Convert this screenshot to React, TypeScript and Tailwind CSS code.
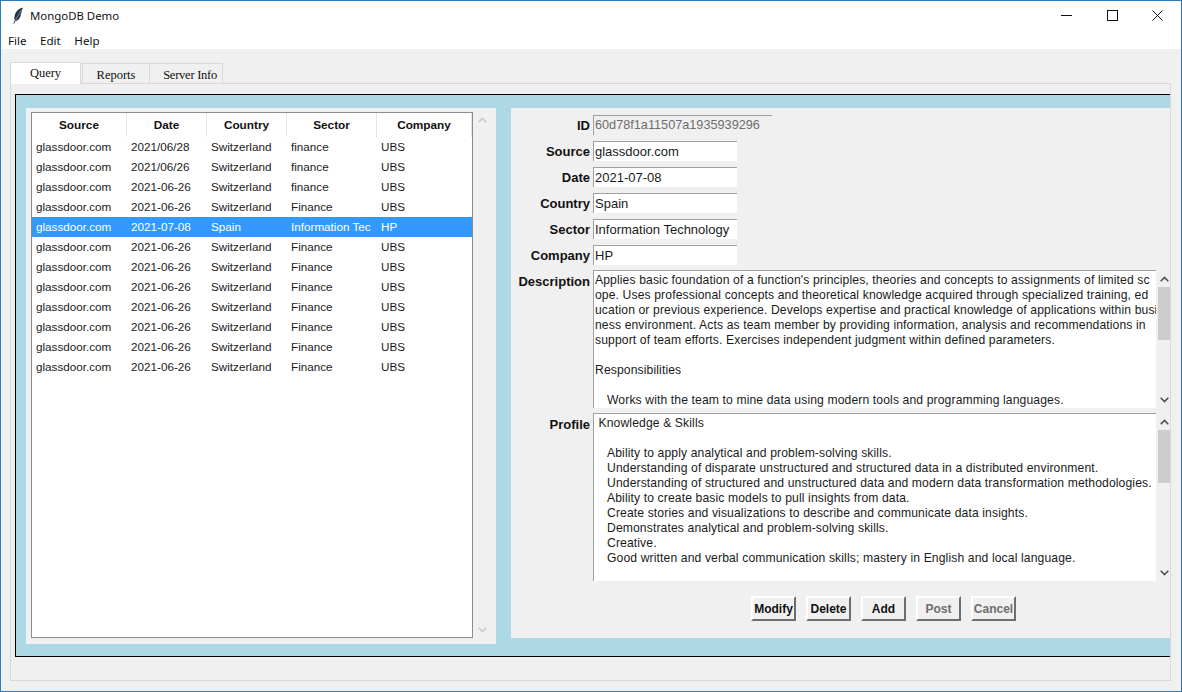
const columns = [
  { key: "source", label: "Source", width: "w-[95px]" },
  { key: "date", label: "Date", width: "w-[80px]" },
  { key: "country", label: "Country", width: "w-[80px]" },
  { key: "sector", label: "Sector", width: "w-[90px]" },
  { key: "company", label: "Company", width: "w-[95px]" },
];

const rows = [
  ["glassdoor.com", "2021/06/28", "Switzerland", "finance", "UBS"],
  ["glassdoor.com", "2021/06/26", "Switzerland", "finance", "UBS"],
  ["glassdoor.com", "2021-06-26", "Switzerland", "finance", "UBS"],
  ["glassdoor.com", "2021-06-26", "Switzerland", "Finance", "UBS"],
  ["glassdoor.com", "2021-07-08", "Spain", "Information Technology", "HP"],
  ["glassdoor.com", "2021-06-26", "Switzerland", "Finance", "UBS"],
  ["glassdoor.com", "2021-06-26", "Switzerland", "Finance", "UBS"],
  ["glassdoor.com", "2021-06-26", "Switzerland", "Finance", "UBS"],
  ["glassdoor.com", "2021-06-26", "Switzerland", "Finance", "UBS"],
  ["glassdoor.com", "2021-06-26", "Switzerland", "Finance", "UBS"],
  ["glassdoor.com", "2021-06-26", "Switzerland", "Finance", "UBS"],
  ["glassdoor.com", "2021-06-26", "Switzerland", "Finance", "UBS"],
];

const fields = [
  { label: "Source", value: "glassdoor.com" },
  { label: "Date", value: "2021-07-08" },
  { label: "Country", value: "Spain" },
  { label: "Sector", value: "Information Technology" },
  { label: "Company", value: "HP" },
];

const description = [
  "Applies basic foundation of a function's principles, theories and concepts to assignments of limited sc",
  "ope. Uses professional concepts and theoretical knowledge acquired through specialized training, ed",
  "ucation or previous experience. Develops expertise and practical knowledge of applications within busi",
  "ness environment. Acts as team member by providing information, analysis and recommendations in",
  "support of team efforts. Exercises independent judgment within defined parameters.",
  " ",
  "Responsibilities",
  " ",
  "   Works with the team to mine data using modern tools and programming languages.",
];

const profile = [
  " Knowledge & Skills",
  " ",
  "   Ability to apply analytical and problem-solving skills.",
  "   Understanding of disparate unstructured and structured data in a distributed environment.",
  "   Understanding of structured and unstructured data and modern data transformation methodologies.",
  "   Ability to create basic models to pull insights from data.",
  "   Create stories and visualizations to describe and communicate data insights.",
  "   Demonstrates analytical and problem-solving skills.",
  "   Creative.",
  "   Good written and verbal communication skills; mastery in English and local language.",
  " ",
];

const buttons = [
  { label: "Modify", disabled: false },
  { label: "Delete", disabled: false },
  { label: "Add", disabled: false },
  { label: "Post", disabled: true },
  { label: "Cancel", disabled: true },
];

function Chevron({ up, color }: { up?: boolean; color: string }) {
  return (
    <svg width="9" height="6" viewBox="0 0 9 6" fill="none" stroke={color} strokeWidth="1.6">
      <path d={up ? "M0.7 5.2 4.5 1.4 8.3 5.2" : "M0.7 0.8 4.5 4.6 8.3 0.8"} />
    </svg>
  );
}

function TextBox({ lines, label }: { lines: string[]; label: string }) {
  return (
    <div className="flex items-stretch">
      <div className="w-[79px] pt-[4px] text-right text-[13px] leading-[16px] font-bold text-[#111]">{label}</div>
      <div className="ml-[3px] w-[563px] overflow-hidden border-t border-l border-[#a0a0a0] bg-white pl-px pt-[2px] text-[12.15px] leading-[15px] tracking-[0.01em] whitespace-pre text-[#1a1a1a]">
        {lines.map((line, i) => (
          <div key={i} className={`h-[15px] ${line.startsWith("   ") ? "pl-[12px]" : ""}`}>
            {line.startsWith("   ") ? line.trim() : line}
          </div>
        ))}
      </div>
      <div className="flex w-[14px] flex-col items-center bg-[#f0f0f0] pl-[2px]">
        <div className="flex h-[17px] items-center justify-center">
          <Chevron up color="#505050" />
        </div>
        <div className="h-[53px] w-full bg-[#cdcdcd]" />
        <div className="flex-1" />
        <div className="flex h-[17px] items-center justify-center">
          <Chevron color="#505050" />
        </div>
      </div>
    </div>
  );
}

export default function App() {
  return (
    <div className="flex h-[692px] w-[1182px] flex-col overflow-hidden border border-[#2b7cb8] bg-[#f0f0f0] font-['Liberation_Sans',sans-serif]">
      <div className="flex h-[29px] shrink-0 items-center bg-white pl-[11px]">
        <svg width="12" height="17" viewBox="0 0 12 17" className="mb-px">
          <path d="M10.8 0.6C7 1.4 3.6 4.6 2.6 9 2.2 10.8 2.3 12.4 2.8 13.4L1.2 16.4 2 16.7 3.5 14C6.2 13.6 8 11 8.6 8.4 9.2 5.8 10.4 3 10.8 0.6Z" fill="#26324a" />
          <path d="M9.4 2.6 3.4 13.4" stroke="#c4cbd6" strokeWidth="0.6" />
        </svg>
        <span className="ml-[6px] pt-[1px] font-['Noto_Sans',sans-serif] text-[11.4px] text-[#111]">MongoDB Demo</span>
        <div className="ml-auto flex items-center text-[#111]">
          <div className="flex w-[46px] justify-center">
            <svg width="11" height="11" viewBox="0 0 11 11" fill="none" stroke="currentColor" shapeRendering="crispEdges">
              <path d="M0 5.5H11" />
            </svg>
          </div>
          <div className="flex w-[46px] justify-center">
            <svg width="11" height="11" viewBox="0 0 11 11" fill="none" stroke="currentColor" shapeRendering="crispEdges">
              <rect x="0.5" y="0.5" width="10" height="10" />
            </svg>
          </div>
          <div className="flex w-[46px] justify-center pr-[1px]">
            <svg width="11" height="11" viewBox="0 0 11 11" fill="none" stroke="currentColor" strokeWidth="1">
              <path d="M0.5 0.5 10.5 10.5M10.5 0.5 0.5 10.5" />
            </svg>
          </div>
        </div>
      </div>

      <div className="flex h-[19px] shrink-0 items-center gap-[13.5px] bg-white pt-[2px] pl-[7px] font-['Noto_Sans',sans-serif] text-[11.6px] text-[#111]">
        <span>File</span>
        <span>Edit</span>
        <span>Help</span>
      </div>

      <div className="flex min-h-0 flex-1 flex-col pt-[13px] pr-[10px] pb-[10px] pl-[9px]">
        <div className="relative z-10 flex h-[21px] shrink-0 items-end font-['Liberation_Serif',serif] text-[12.5px] text-[#111]">
          <div className="flex h-[22px] w-[71px] translate-y-px items-center justify-center border-x border-t border-[#d9d9d9] bg-white pb-px">Query</div>
          <div className="ml-px flex h-[20px] w-[68px] items-center justify-center border-x border-t border-[#d9d9d9] bg-[#f0f0f0] pt-[3px]">Reports</div>
          <div className="flex h-[20px] w-[73px] items-center justify-end border-r border-t border-[#d9d9d9] bg-[#f0f0f0] pt-[3px] pr-[5px] tracking-[-0.02em]">Server Info</div>
        </div>

        <div className="flex min-h-0 flex-1 flex-col border border-[#d9d9d9] pt-[10px] pb-[23px] pl-1">
          <div className="flex min-h-0 flex-1 gap-[15px] border-y border-l border-black bg-[#add8e6] pt-[13px] pl-[10px]">
            <div className="mb-[12px] flex w-[470px] bg-[#f0f0f0] pt-1 pb-[6px] pl-[5px]">
              <div className="w-[442px] border border-[#8c8c8c] bg-white">
                <div className="flex h-[24px] text-[11.8px] font-bold text-[#111]">
                  {columns.map((col) => (
                    <div key={col.key} className={`${col.width} flex items-center justify-center border-r border-[#e5e5e5] pt-[2px]`}>
                      {col.label}
                    </div>
                  ))}
                </div>
                {rows.map((row, i) => (
                  <div key={i} className={`flex h-[20px] w-[440px] items-center pb-px text-[11.7px] leading-[18px] ${i === 4 ? "bg-[#3399ff] text-white" : "text-[#1a1a1a]"}`}>
                    {row.map((cell, j) => (
                      <div key={j} className={`${columns[j].width} pr-[6px] pl-1`}>
                        <div className="overflow-hidden whitespace-nowrap">{cell}</div>
                      </div>
                    ))}
                  </div>
                ))}
              </div>
              <div className="flex w-[23px] flex-col items-center justify-between pt-[5px] pr-[5px] pb-[5px]">
                <Chevron up color="#c8c8c8" />
                <Chevron color="#c8c8c8" />
              </div>
            </div>

            <div className="mb-[18px] flex w-[659px] flex-col bg-[#f0f0f0] pt-[7px]">
              <div className="flex h-[20px] items-center">
                <div className="w-[79px] pt-[2px] text-right text-[13px] font-bold text-[#111]">ID</div>
                <div className="ml-[3px] flex h-[20px] w-[179px] items-center border-t border-l border-[#a0a0a0] pl-px text-[12.7px] text-[#6d6d6d]">60d78f1a11507a1935939296</div>
              </div>
              {fields.map((f) => (
                <div key={f.label} className="mt-[6px] flex h-[20px] items-center">
                  <div className="w-[79px] pt-[2px] text-right text-[13px] font-bold text-[#111]">{f.label}</div>
                  <div className="ml-[3px] flex h-[20px] w-[144px] items-center border-t border-l border-[#a0a0a0] bg-white pl-px text-[13px] whitespace-nowrap text-[#1a1a1a]">{f.value}</div>
                </div>
              ))}
              <div className="mt-[5px] flex flex-col gap-[5px]">
                <TextBox label="Description" lines={description} />
                <TextBox label="Profile" lines={profile} />
              </div>
              <div className="mt-[15px] flex gap-[10px] pl-[240px]">
                {buttons.map((b) => (
                  <div
                    key={b.label}
                    className={`flex h-[25px] w-[45px] items-center justify-center border-2 border-t-white border-r-[#6e6e6e] border-b-[#6e6e6e] border-l-white bg-[#f0f0f0] text-[12px] font-bold ${b.disabled ? "text-[#6d6d6d]" : "text-[#111]"}`}
                  >
                    {b.label}
                  </div>
                ))}
              </div>
            </div>
          </div>
        </div>
      </div>
    </div>
  );
}
